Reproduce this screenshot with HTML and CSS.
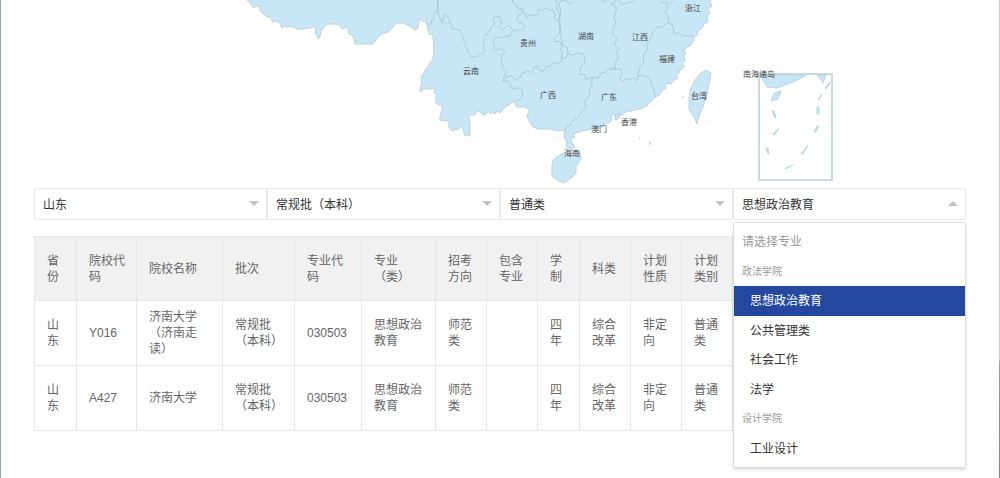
FILE: index.html
```html
<!DOCTYPE html>
<html lang="zh-CN">
<head>
<meta charset="utf-8">
<meta name="viewport" content="width=device-width, initial-scale=1">
<title>招生计划</title>
<link rel="stylesheet" href="styles.css">
</head>
<body>
<main class="page">
  <svg class="map" viewBox="0 0 932 188" preserveAspectRatio="xMidYMin meet" role="img" aria-label="地图">
    <g transform="translate(-34 0)">
      <path class="land" d="M245 -2L248 1L251 4L254 8L256 6L259 6L260 10L262 13L267 17L270 17L272 19L272 22L276 21L279 22L282 28L284 25L286 27L290 26L295 28L297 29L302 29L308 28L311 28L315 26L316 34L318 39L320 37L321 31L327 24L334 24L340 25L341 28L343 29L346 27L348 28L349 34L352 35L354 38L355 44L364 44L373 44L376 40L379 36L382 34L388 32L393 27L397 23L403 23L408 25L412 28L415 30L418 28L419 21L421 19L423 22L425 22L427 24L429 34L433 35L434 50L433 60L431 61L428 67L425 70L421 77L422 83L420 88L420 92L424 89L428 89L435 88L434 93L436 95L436 103L439 105L443 106L440 116L440 120L447 121L449 123L449 128L452 131L456 129L457 130L462 126L464 132L464 135L470 136L470 127L469 117L470 115L475 115L477 111L480 112L483 115L485 115L489 111L490 114L493 112L495 114L497 111L500 113L505 107L509 105L513 101L517 107L525 107L528 109L530 111L527 115L528 119L533 127L538 129L550 129L554 130L558 131L565 130L564 137L567 143L566 147L572 150L575 147L571 141L571 138L575 137L573 135L576 133L582 131L592 129L596 127L603 127L605 123L609 123L612 120L611 117L613 113L615 116L617 118L620 116L620 114L623 115L623 111L625 113L627 110L629 112L634 110L640 109L647 106L648 104L652 101L653 98L658 96L663 90L666 88L665 85L667 83L671 84L674 80L678 78L676 75L680 72L676 70L681 70L685 66L681 65L685 61L684 55L686 53L682 50L685 50L686 47L690 46L694 40L694 37L697 35L698 31L702 28L704 24L708 21L707 16L710 13L708 9L712 6L710 2L711 -2Z"/>
      <path class="land" d="M553 160L558 156L564 153L570 155L575 151L580 153L581 159L576 166L576 173L570 179L564 183L557 180L552 176L552 166Z"/>
      <path class="land" d="M701 73L706 70L711 73L709 84L706 98L701 112L698 119L697 124L694 117L689 109L689 99L691 88L695 80Z"/>
      <path class="land" d="M682 97h2M706 121h1M639 137l1 2M649 142l2 1l-1 2M557 137h1M700 35l1-1"/>
      <g class="borders" transform="translate(410 0) scale(.333333)">
        <path d="M50 68L57 74L65 70L64 61L72 62L70 45L74 36L82 38L81 28L83 0L85 40L95 68L98 70L103 40L110 48L120 60L118 69L126 72L126 84L135 88L149 90L157 106L160 122L168 131L166 137L176 158L182 169L191 172L203 168L205 163L217 162L222 155L220 139L222 114L225 105L233 103L235 95L241 92L243 80L253 73L249 58L254 49L269 50L274 61L272 73L265 81L275 88L285 84L292 77L301 80L307 88L305 97L300 109L287 109L278 114L263 110L253 114L248 124L254 134L249 149L257 151L268 146L282 151L283 158L274 166L276 179L271 187L276 192L280 205L289 215L282 230L279 245L293 242L302 253L301 264L316 266L326 263L337 269L337 288L331 298L317 306"/>
        <path d="M307 0L312 13L322 16L324 26L339 28L337 37L347 40L349 53L364 43L375 48L385 40L384 29L397 31L410 24L421 30L433 34L436 47L432 54L442 61L448 70L453 89L447 101L433 115L435 124L451 126L455 139L450 149L457 158L454 171L458 181L447 188L431 190L421 199L409 199L399 214L386 209L380 196L372 203L367 216L352 215L336 219L331 232L319 239L303 228L290 231L282 240"/>
        <path d="M337 37L325 48L320 59L326 67L339 69L345 82L337 91L318 90L307 96"/>
        <path d="M434 0L443 14L437 23L445 31L449 48L443 66M453 0L447 14L453 33L450 49L449 72L451 108L458 126L458 137L471 142L475 161L467 176L454 171M475 161L490 166L501 159L520 162L525 177L523 188L510 206L511 222L525 223L527 239L535 235L547 233L565 234L572 220L587 216L600 204L615 204M547 233L545 245L547 258L539 265L539 289L526 300L526 322L514 333L513 343L501 354L488 364L482 376L469 379L467 391"/>
        <path d="M453 0L470 4L479 14L485 3M572 0L580 7L590 0M600 9L610 17L615 0M615 17L620 33L612 49L617 71L609 84L608 103L621 117L614 132L626 145L620 157L625 174L615 189L617 207L600 209M623 0L635 13L645 12L653 7L670 6L675 0M745 0L754 8L767 5L773 25L765 37L775 52L776 68L759 77L755 84L742 80L727 99L724 111L711 130L711 151L701 163L700 188L690 203L685 220L683 230L691 226L708 230L722 240L725 259L733 271L735 291M685 230L680 242L670 235L648 238L638 244L626 230L637 223L633 208L617 207M776 69L785 71L789 83L794 103L806 98L817 107L836 108L847 111M770 8L779 13L790 2"/>
      </g>
      <path class="land" d="M615 115l4-2v5l-4 2z"/>
      <g class="inset">
        <rect x="759" y="74" width="73" height="106"/>
        <path d="M760 75L767 87L777 88L793 82L807 75ZM817 75L823 83L826 75ZM774 93L781 91L778 99L771 101ZM772 111h2l2 7h-1zM773 134l5-5h1l-5 6zM766 148h2l1 6h-1zM785 168l8-3-7 4zM801 154l7-9-5 9zM814 132l3-6h2l-3 6zM817 107h2v7h-2zM818 100l4-6-3 6zM825 88l5-6v1l-4 6z"/>
      </g>
      <g class="labels">
        <text x="471" y="74">云南</text><text x="528" y="46">贵州</text><text x="586" y="39">湖南</text>
        <text x="640" y="40">江西</text><text x="693" y="11">浙江</text><text x="667" y="62">福建</text>
        <text x="548" y="98">广西</text><text x="609" y="100">广东</text><text x="699" y="99">台湾</text>
        <text x="629" y="125">香港</text><text x="599" y="132">澳门</text><text x="572" y="156">海南</text>
        <text x="759" y="77">南海诸岛</text>
      </g>
    </g>
  </svg>

  <form class="filters">
    <div class="field"><select aria-label="省份"><option>山东</option></select></div>
    <div class="field"><select aria-label="批次"><option>常规批（本科）</option></select></div>
    <div class="field"><select aria-label="科类"><option>普通类</option></select></div>
    <div class="field open">
      <button class="toggle" type="button" aria-label="专业" aria-haspopup="listbox" aria-expanded="true" aria-controls="majors">思想政治教育</button>
      <div class="menu" id="majors" role="listbox" aria-label="专业">
        <button type="button" role="option" class="item hint">请选择专业</button>
        <div class="item group">政法学院</div>
        <button type="button" role="option" class="item child selected" aria-selected="true">思想政治教育</button>
        <button type="button" role="option" class="item child">公共管理类</button>
        <button type="button" role="option" class="item child">社会工作</button>
        <button type="button" role="option" class="item child">法学</button>
        <div class="item group">设计学院</div>
        <button type="button" role="option" class="item child">工业设计</button>
      </div>
    </div>
  </form>

  <table class="plans">
    <colgroup>
      <col class="w42"><col class="w60"><col class="w86"><col class="w72"><col class="w67"><col class="w74"><col class="w51"><col class="w51"><col class="w42"><col class="w51"><col class="w51"><col class="w51"><col>
    </colgroup>
    <thead>
      <tr><th>省份</th><th>院校代码</th><th>院校名称</th><th>批次</th><th>专业代码</th><th>专业（类）</th><th>招考方向</th><th>包含专业</th><th>学制</th><th>科类</th><th>计划性质</th><th>计划类别</th><th></th></tr>
    </thead>
    <tbody>
      <tr><td>山东</td><td>Y016</td><td>济南大学（济南走读）</td><td>常规批（本科）</td><td>030503</td><td>思想政治教育</td><td>师范类</td><td></td><td>四年</td><td>综合改革</td><td>非定向</td><td>普通类</td><td></td></tr>
      <tr><td>山东</td><td>A427</td><td>济南大学</td><td>常规批（本科）</td><td>030503</td><td>思想政治教育</td><td>师范类</td><td></td><td>四年</td><td>综合改革</td><td>非定向</td><td>普通类</td><td></td></tr>
    </tbody>
  </table>
</main>
</body>
</html>
```
FILE: styles.css
```css
* { box-sizing: border-box; }

body {
  margin: 0;
  background: #fefefe;
  color: #333;
  font: 12px/16px "Liberation Sans", "Noto Sans CJK SC", sans-serif;
}

button, select { font: inherit; color: inherit; }

.page {
  min-height: 100vh;
  padding: 0 34px 0 33px;
  border-left: 1px solid #93a6ca;
  background: linear-gradient(#cdcdcd 75%, #a39c98 76%, #858585) right / 1px 100% no-repeat;
}

.map { display: block; width: 100%; height: 188px; }
.land { fill: #c8e6f5; stroke: #bdd3dc; stroke-width: 1; stroke-linejoin: round; }
.borders { fill: none; stroke: #a2bac4; stroke-width: 2; stroke-linejoin: round; }
.inset { fill: #c8e6f5; stroke: #bdd6df; stroke-width: 1; }
.inset rect { fill: none; stroke: #c6dbe2; stroke-width: 2; }
.labels { fill: #444; font-size: 8px; text-anchor: middle; }

.filters { display: grid; grid-template-columns: repeat(4, 1fr); }
.field { position: relative; }
.field::after {
  content: "";
  position: absolute;
  right: 8px;
  top: 13px;
  border: 5px solid transparent;
  border-top-color: #c2c2c2;
  pointer-events: none;
}
.field.open::after { top: 8px; border-color: transparent transparent #c2c2c2; }
.field select, .toggle {
  display: block;
  width: 100%;
  height: 32px;
  padding: 2px 8px 0;
  border: 1px solid #e9e9e9;
  border-radius: 2px;
  background: #fff;
  text-align: left;
  appearance: none;
}

.menu {
  position: absolute;
  top: 34px;
  left: 0;
  right: 0;
  z-index: 2;
  padding: 4px 0;
  border: 1px solid #dedede;
  border-radius: 2px;
  background: #fff;
  box-shadow: 0 2px 3px rgba(0, 0, 0, .12);
}
.item {
  display: flex;
  align-items: center;
  width: 100%;
  height: 30px;
  padding: 0 8px;
  border: 0;
  background: none;
}
.item:nth-child(even) { height: 29px; }
.hint { color: #999; }
.group { color: #999; font-size: 10px; }
.child { padding: 0 16px; }
.selected { background: #24489d; color: #fff; }

.plans {
  width: 100%;
  margin-top: 16px;
  border-collapse: collapse;
  table-layout: fixed;
  color: #666;
}
.plans th, .plans td {
  height: 65px;
  padding: 0 11px 0 12px;
  border: 1px solid #e6e6e6;
  font-weight: 400;
  text-align: left;
}
.plans th { height: 64px; background: #f1f1f1; }
.w42 { width: 42px; }
.w51 { width: 51px; }
.w60 { width: 60px; }
.w67 { width: 67px; }
.w72 { width: 72px; }
.w74 { width: 74px; }
.w86 { width: 86px; }
```
